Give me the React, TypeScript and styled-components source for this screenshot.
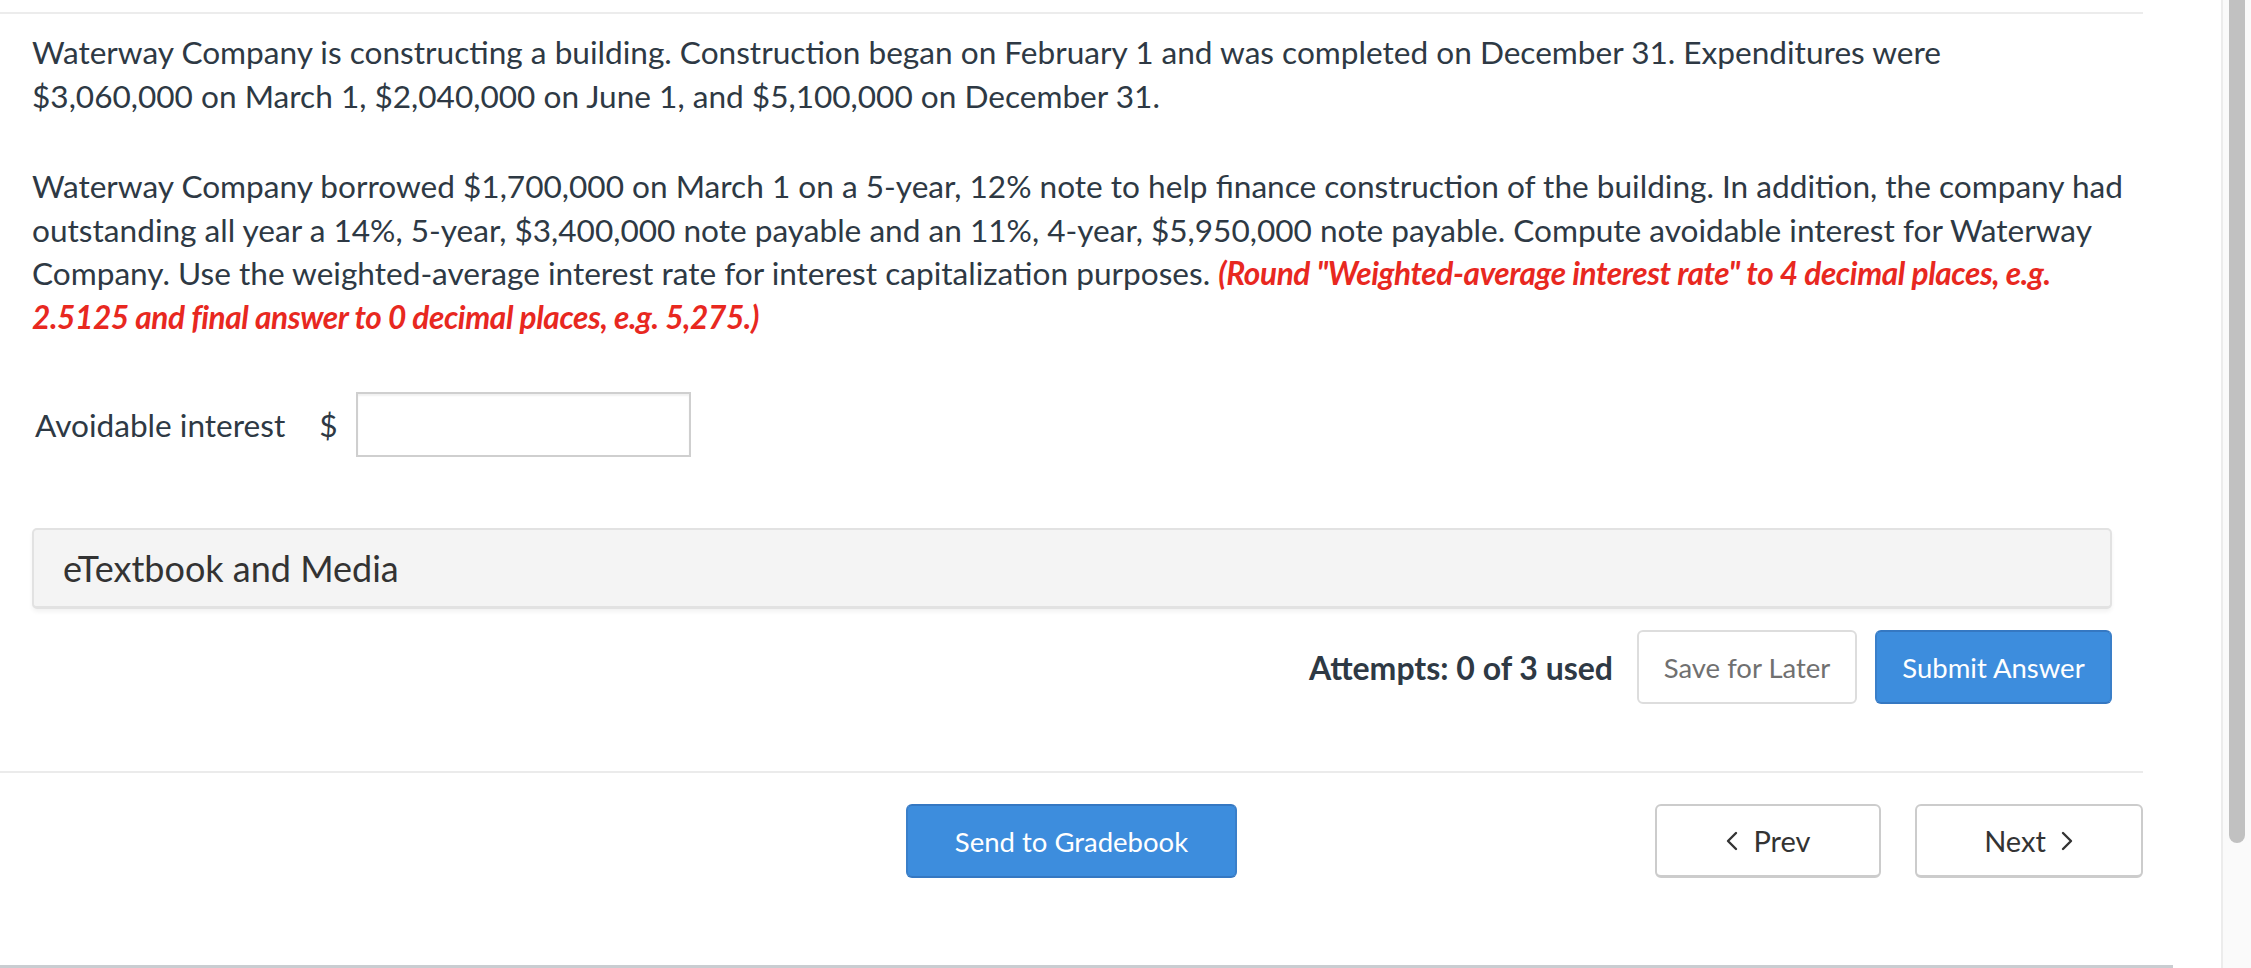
import React from "react";
import styled, { createGlobalStyle } from "styled-components";

const GlobalStyle = createGlobalStyle`
  html, body {
    margin: 0;
    padding: 0;
    background: #ffffff;
    overflow: hidden;
  }
  body {
    font-family: Lato, "Open Sans", Arial, sans-serif;
    color: #2e3944;
  }
`;

const Page = styled.div`
  display: flex;
  width: 2251px;
  height: 968px;
`;

const Main = styled.div`
  flex: 1;
  display: flex;
  flex-direction: column;
`;

const Content = styled.div`
  width: 2143px;
  flex: 1;
  display: flex;
  flex-direction: column;
  padding-top: 12px;
`;

const TopRule = styled.div`
  height: 2px;
  background: #ececec;
`;

const Question = styled.div`
  padding: 17px 31px 0 32px;
  display: flex;
  flex-direction: column;
`;

const Paragraph = styled.p<{ $gap?: number }>`
  margin: 0 0 ${(p) => p.$gap ?? 0}px;
  font-size: 31.6px;
  line-height: 43.5px;
  color: #2e3944;
  white-space: nowrap;
`;

const Hint = styled.span`
  color: #e8281f;
  font-weight: 700;
  font-style: italic;
  letter-spacing: -0.4px;
`;

const AnswerRow = styled.div`
  display: flex;
  align-items: center;
  margin-top: 53px;
  padding-left: 3px;
`;

const Label = styled.span`
  font-size: 31.6px;
  color: #2e3944;
  margin-right: 34px;
`;

const Currency = styled.span`
  font-size: 31.6px;
  color: #2e3944;
  margin-right: 18px;
`;

const Input = styled.input`
  width: 335px;
  height: 65px;
  box-sizing: border-box;
  border: 2px solid #cfcfcf;
  box-shadow: inset 0 2px 2px rgba(0, 0, 0, 0.06);
  font-family: inherit;
  font-size: 29px;
  outline: none;
`;

const Panel = styled.div`
  margin-top: 71px;
  height: 81px;
  box-sizing: border-box;
  background: #f4f4f4;
  border: 2px solid #e2e2e2;
  border-bottom-width: 3px;
  border-radius: 5px;
  box-shadow: 0 3px 4px rgba(0, 0, 0, 0.05);
  display: flex;
  align-items: center;
  padding-left: 29px;
  font-size: 36px;
  color: #333333;
`;

const SubmitRow = styled.div`
  margin-top: 21px;
  display: flex;
  justify-content: flex-end;
  align-items: center;
  gap: 18px;
`;

const Attempts = styled.span`
  font-size: 32px;
  font-weight: 700;
  color: #2e3944;
  margin-right: 6px;
`;

const Button = styled.button<{ $primary?: boolean; $w: number }>`
  width: ${(p) => p.$w}px;
  height: 74px;
  box-sizing: border-box;
  border-radius: 6px;
  font-family: inherit;
  font-size: 27.5px;
  display: flex;
  align-items: center;
  justify-content: center;
  gap: 14px;
  cursor: pointer;
  background: ${(p) => (p.$primary ? "#3d8ddd" : "#ffffff")};
  color: ${(p) => (p.$primary ? "#ffffff" : "#707070")};
  border: 2px solid ${(p) => (p.$primary ? "#3a7fc9" : "#dddddd")};
  border-top-color: ${(p) => (p.$primary ? "#3578c2" : "#dddddd")};
  border-bottom-color: ${(p) => (p.$primary ? "#3578c2" : "#dddddd")};
`;

const NavButton = styled(Button)`
  color: #333333;
  border-color: #cccccc;
  border-bottom-width: 3px;
  font-size: 29px;
`;

const Divider = styled.div`
  margin-top: 67px;
  height: 2px;
  background: #ebebeb;
`;

const NavRow = styled.div`
  margin-top: 31px;
  display: grid;
  grid-template-columns: 1fr auto 1fr;
  align-items: center;
`;

const NavRight = styled.div`
  display: flex;
  justify-content: flex-end;
  gap: 34px;
`;

const BottomRule = styled.div`
  width: 2173px;
  height: 3px;
  background: #c9cdd1;
`;

const ScrollTrack = styled.div`
  width: 28px;
  height: 968px;
  background: #fafafa;
  border-left: 2px solid #ececec;
  display: flex;
  justify-content: center;
`;

const ScrollThumb = styled.div`
  width: 16px;
  height: 843px;
  background: #c1c1c1;
  border-radius: 0 0 8px 8px;
`;

const Chevron = ({ dir }: { dir: "left" | "right" }) => (
  <svg width="14" height="20" viewBox="0 0 14 20" fill="none">
    <path
      d={dir === "left" ? "M11 2 L3 10 L11 18" : "M3 2 L11 10 L3 18"}
      stroke="#333333"
      strokeWidth="2.4"
      strokeLinecap="round"
      strokeLinejoin="round"
    />
  </svg>
);

export default function App() {
  return (
    <>
      <GlobalStyle />
      <Page>
        <Main>
          <Content>
            <TopRule />
            <Question>
              <Paragraph $gap={47}>
                Waterway Company is constructing a building. Construction began on February 1 and was
                completed on December 31. Expenditures were
                <br />
                $3,060,000 on March 1, $2,040,000 on June 1, and $5,100,000 on December 31.
              </Paragraph>
              <Paragraph>
                Waterway Company borrowed $1,700,000 on March 1 on a 5-year, 12% note to help finance
                construction of the building. In addition, the company had
                <br />
                outstanding all year a 14%, 5-year, $3,400,000 note payable and an 11%, 4-year,
                $5,950,000 note payable. Compute avoidable interest for Waterway
                <br />
                Company. Use the weighted-average interest rate for interest capitalization purposes.{" "}
                <Hint>
                  (Round "Weighted-average interest rate" to 4 decimal places, e.g.
                  <br />
                  2.5125 and final answer to 0 decimal places, e.g. 5,275.)
                </Hint>
              </Paragraph>
              <AnswerRow>
                <Label>Avoidable interest</Label>
                <Currency>$</Currency>
                <Input type="text" />
              </AnswerRow>
              <Panel>eTextbook and Media</Panel>
              <SubmitRow>
                <Attempts>Attempts: 0 of 3 used</Attempts>
                <Button $w={220}>Save for Later</Button>
                <Button $primary $w={237}>
                  Submit Answer
                </Button>
              </SubmitRow>
            </Question>
            <Divider />
            <NavRow>
              <span />
              <Button $primary $w={331}>
                Send to Gradebook
              </Button>
              <NavRight>
                <NavButton $w={226}>
                  <Chevron dir="left" />
                  Prev
                </NavButton>
                <NavButton $w={228}>
                  Next
                  <Chevron dir="right" />
                </NavButton>
              </NavRight>
            </NavRow>
          </Content>
          <BottomRule />
        </Main>
        <ScrollTrack>
          <ScrollThumb />
        </ScrollTrack>
      </Page>
    </>
  );
}
